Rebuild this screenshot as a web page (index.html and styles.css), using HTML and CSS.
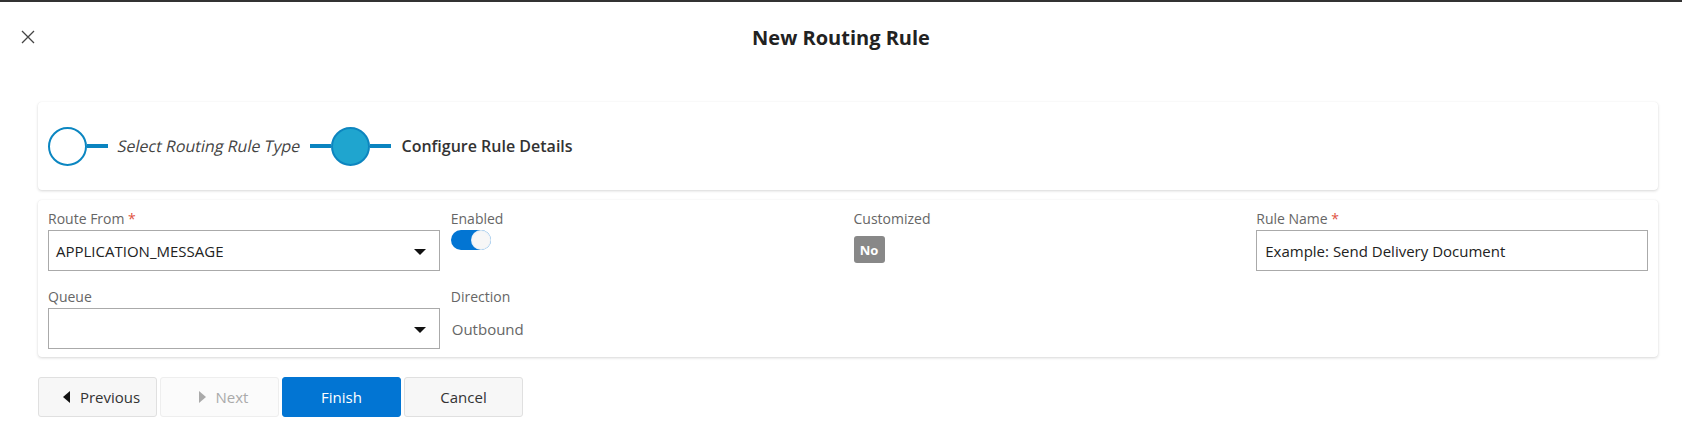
FILE: index.html
```html
<!DOCTYPE html>
<html lang="en">
<head>
<meta charset="utf-8">
<title>New Routing Rule</title>
<link rel="stylesheet" href="styles.css">
</head>
<body>
<div class="frame">
  <header class="header">
    <div class="header-left">
      <button class="close" aria-label="Close">
        <svg width="14" height="14" viewBox="0 0 14 14"><path d="M1 1L13 13M13 1L1 13" stroke="#444" stroke-width="1.3" fill="none"/></svg>
      </button>
    </div>
    <h1 class="title">New Routing Rule</h1>
    <div class="header-right"></div>
  </header>

  <main class="content">
    <section class="card stepper">
      <span class="step-circle"></span>
      <span class="step-line"></span>
      <span class="step-label step-label-done">Select Routing Rule Type</span>
      <span class="step-line"></span>
      <span class="step-circle step-circle-active"></span>
      <span class="step-line"></span>
      <span class="step-label step-label-active">Configure Rule Details</span>
    </section>

    <section class="card form">
      <div class="field">
        <label class="field-label">Route From <span class="req">*</span></label>
        <div class="select"><span class="select-value">APPLICATION_MESSAGE</span><span class="caret"></span></div>
      </div>
      <div class="field">
        <label class="field-label">Enabled</label>
        <div class="toggle"><span class="knob"></span></div>
      </div>
      <div class="field">
        <label class="field-label">Customized</label>
        <div class="badge-wrap"><span class="badge">No</span></div>
      </div>
      <div class="field">
        <label class="field-label">Rule Name <span class="req">*</span></label>
        <div class="input">Example: Send Delivery Document</div>
      </div>
      <div class="field">
        <label class="field-label">Queue</label>
        <div class="select"><span class="select-value"></span><span class="caret"></span></div>
      </div>
      <div class="field">
        <label class="field-label">Direction</label>
        <div class="static-value">Outbound</div>
      </div>
      <div class="field"></div>
      <div class="field"></div>
    </section>

    <div class="actions">
      <button class="btn btn-icon"><span class="tri tri-left"></span>Previous</button>
      <button class="btn btn-icon btn-disabled"><span class="tri tri-right"></span>Next</button>
      <button class="btn btn-primary">Finish</button>
      <button class="btn">Cancel</button>
    </div>
  </main>
</div>
</body>
</html>
```
FILE: styles.css
```css
* { box-sizing: border-box; }
html, body { margin: 0; padding: 0; background: #fff; }
body {
  font-family: "Open Sans", "Liberation Sans", sans-serif;
  color: #333;
  font-size: 14px;
}
.frame {
  border-top: 2px solid #333;
  min-height: 428px;
}
.header {
  display: grid;
  grid-template-columns: 1fr auto 1fr;
  align-items: center;
  height: 70px;
}
.header-left { padding-left: 21px; display: flex; align-items: center; }
.close {
  border: 0; background: transparent; padding: 0; width: 14px; height: 14px;
  display: flex; align-items: center; justify-content: center; cursor: pointer;
}
.title {
  margin: 0;
  font-size: 20px;
  font-weight: 700;
  color: #222;
}
.content {
  padding: 30px 24px 0 38px;
}
.card {
  background: #fff;
  border-radius: 4px;
  box-shadow: 0 1px 3px rgba(0,0,0,0.16), 0 0 1px rgba(0,0,0,0.06);
}
.stepper {
  height: 88px;
  display: flex;
  align-items: center;
  padding: 0 10px;
}
.step-circle {
  width: 39px; height: 39px;
  border-radius: 50%;
  border: 2px solid #0b86c1;
  background: #fff;
  flex: none;
}
.step-circle-active { background: #1fa5cf; border-color: #0d85bf; }
.step-line {
  width: 21px; height: 4px; background: #0a84c0; flex: none;
}
.step-label { font-size: 16px; margin: 0 10px; white-space: nowrap; display: inline-block; }
.step-label-done { color: #444; transform: skewX(-12deg); }
.step-label-active { font-weight: 600; color: #333; }

.form {
  margin-top: 10px;
  padding: 9px 10px 8px;
  display: grid;
  grid-template-columns: repeat(4, 1fr);
  column-gap: 11px;
  row-gap: 16px;
}
.field { display: flex; flex-direction: column; min-width: 0; }
.field-label {
  font-size: 14px;
  line-height: 20px;
  color: #666;
  margin-bottom: 1px;
}
.req { color: #e0533f; }
.select, .input {
  height: 41px;
  border: 1px solid #aaa;
  display: flex;
  align-items: center;
  padding: 0 13px 0 7px;
  font-size: 15px;
  color: #222;
  background: #fff;
}
.select-value { flex: 1; }
.caret {
  width: 0; height: 0;
  border-left: 6px solid transparent;
  border-right: 6px solid transparent;
  border-top: 6px solid #111;
  margin-top: 2px;
}
.input { padding-left: 8px; }
.toggle {
  width: 40px; height: 20px;
  border-radius: 10px;
  background: #0275d3;
  display: flex; align-items: center; justify-content: flex-end;
  padding: 1px;
}
.knob {
  width: 18px; height: 18px; border-radius: 50%;
  background: #f7f7f7;
  box-shadow: 0 0 0 1px #e6eef6;
}
.badge-wrap { height: 41px; display: flex; align-items: center; }
.badge {
  display: inline-flex; align-items: center; justify-content: center;
  width: 31px; height: 27px;
  background: #888;
  color: #fff;
  font-weight: 700;
  font-size: 13px;
  border-radius: 3px;
  margin-top: -2px;
}
.static-value {
  height: 41px;
  display: flex; align-items: center;
  color: #666;
  font-size: 15px;
  padding-left: 1px;
}
.actions {
  margin-top: 20px;
  display: flex;
  gap: 3px;
}
.btn {
  width: 119px; height: 40px;
  border: 1px solid #e0e0e0;
  border-radius: 3px;
  background: #f7f7f7;
  color: #333;
  font-family: inherit;
  font-size: 15px;
  display: flex; align-items: center; justify-content: center;
  gap: 10px;
  padding: 0;
}
.btn-icon { padding-left: 8px; }
.btn-disabled { background: #fbfbfb; border-color: #eeeeee; color: #aaa; }
.btn-primary { background: #0275d3; border-color: #0275d3; color: #fff; }
.tri { width: 0; height: 0; border-top: 6.5px solid transparent; border-bottom: 6.5px solid transparent; }
.tri-left { border-right: 7px solid #111; }
.tri-right { border-left: 7px solid #aaa; }
```
